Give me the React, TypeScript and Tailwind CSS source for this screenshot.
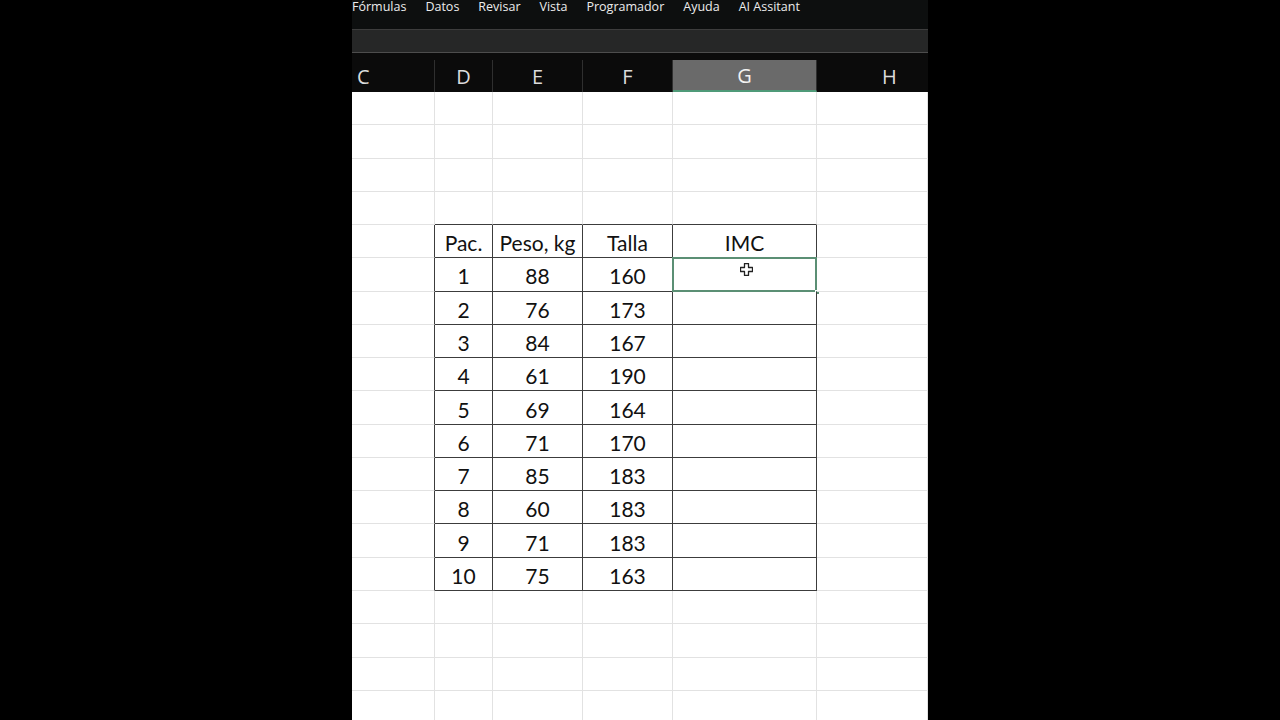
import React from "react";

const menu = ["Fórmulas", "Datos", "Revisar", "Vista", "Programador", "Ayuda", "AI Assitant"];
const cols = [
  { name: "C", w: "w-[83px]", head: "justify-start pl-[5px]" },
  { name: "D", w: "w-[58px]", head: "justify-center" },
  { name: "E", w: "w-[90px]", head: "justify-center" },
  { name: "F", w: "w-[90px]", head: "justify-center" },
  { name: "G", w: "w-[144px]", head: "justify-center" },
  { name: "H", w: "w-[111px]", head: "justify-start pl-[65px]" },
];

const data: string[][] = [
  ["Pac.", "Peso, kg", "Talla", "IMC"],
  ["1", "88", "160", ""],
  ["2", "76", "173", ""],
  ["3", "84", "167", ""],
  ["4", "61", "190", ""],
  ["5", "69", "164", ""],
  ["6", "71", "170", ""],
  ["7", "85", "183", ""],
  ["8", "60", "183", ""],
  ["9", "71", "183", ""],
  ["10", "75", "163", ""],
];

const TOP = 4; // first row of the table
const ROWS = 19;

const Cursor = () => (
  <svg width="13" height="13" viewBox="0 0 13 13" className="absolute left-[67px] top-[5px]">
    <path
      d="M4.5 0.5h4v4h4v4h-4v4h-4v-4h-4v-4h4z"
      fill="#fff"
      stroke="#222"
      strokeWidth="1.3"
      strokeLinejoin="round"
    />
  </svg>
);

const Cell = ({ r, c }: { r: number; c: number }) => {
  const inTable = r >= TOP && r < TOP + data.length;
  const darkBottom = r >= TOP - 1 && r < TOP + data.length && c >= 1 && c <= 4;
  const darkRight = inTable && c <= 4;
  const selected = r === TOP + 1 && c === 4;
  const text = inTable && c >= 1 && c <= 4 ? data[r - TOP][c - 1] : "";
  return (
    <div
      className={`${cols[c].w} shrink-0 h-full relative flex items-center justify-center border-b border-r ${
        darkBottom ? "border-b-[#3c3c3c]" : "border-b-[#e2e2e2]"
      } ${darkRight ? "border-r-[#3c3c3c]" : "border-r-[#e2e2e2]"}`}
    >
      <span className="text-[21px] text-[#111] leading-none pt-[3px]">{text}</span>
      {selected && (
        <>
          <div className="absolute -left-px -top-px -right-px -bottom-px border-2 border-[#5b8f74]" />
          <div className="absolute -right-[4px] -bottom-[4px] w-[5px] h-[5px] bg-[#5b8f74] border border-white" />
          <Cursor />
        </>
      )}
    </div>
  );
};

export default function App() {
  return (
    <div className="w-[1280px] h-[720px] bg-black flex justify-center overflow-hidden">
      <div className="w-[576px] h-full flex flex-col overflow-hidden bg-white">
        {/* ribbon tabs */}
        <div className="h-[29px] shrink-0 bg-[#0d0f0f] flex items-start gap-[19px] pt-px text-[12.5px] text-[#ececec] leading-none font-['Open_Sans',sans-serif]">
          {menu.map((m) => (
            <span key={m} className="whitespace-nowrap">{m}</span>
          ))}
        </div>
        <div className="h-px shrink-0 bg-[#3d3d3d]" />
        {/* formula bar */}
        <div className="h-[22px] shrink-0 bg-[#262727]" />
        <div className="h-px shrink-0 bg-[#4d4d4d]" />
        {/* column headers */}
        <div className="h-[39px] shrink-0 bg-[#0b0b0b] flex items-end font-['Open_Sans',sans-serif]">
          {cols.map((c, i) => (
            <div
              key={c.name}
              className={`${c.w} shrink-0 h-[32px] flex items-center pt-[2px] text-[20px] text-[#dcdcdc] ${c.head} ${
                i < 5 ? "border-r border-r-[#2f2f2f]" : ""
              } ${c.name === "G" ? "bg-[#6a6a6a] border-b-2 border-b-[#4f9a78] text-[#f2f2f2]" : ""}`}
            >
              {c.name}
            </div>
          ))}
        </div>
        {/* sheet grid */}
        <div className="flex flex-col font-['Lato',sans-serif]">
          {Array.from({ length: ROWS }).map((_, r) => (
            <div key={r} className="h-[33.27px] shrink-0 flex">
              {cols.map((_, c) => (
                <Cell key={c} r={r} c={c} />
              ))}
            </div>
          ))}
        </div>
      </div>
    </div>
  );
}
